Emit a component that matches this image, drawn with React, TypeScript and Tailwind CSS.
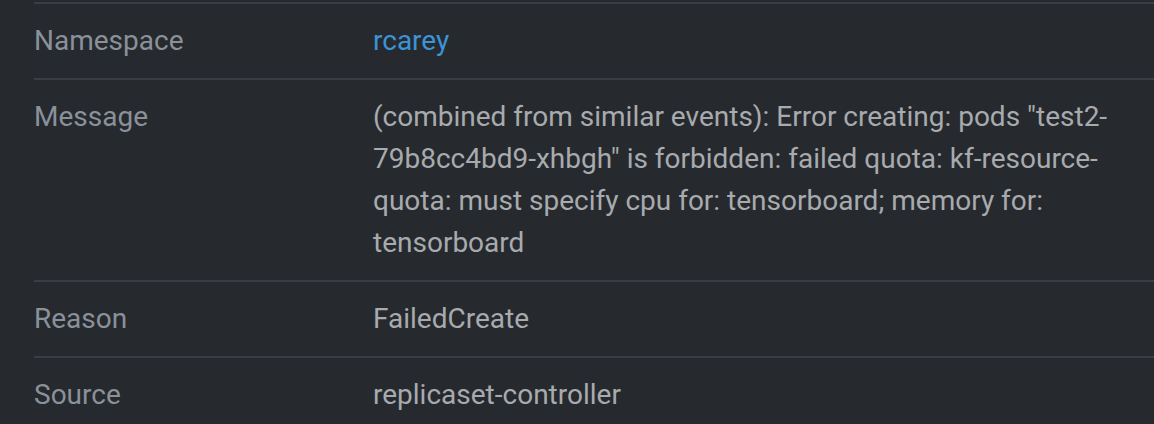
const rows: { label: string; value: string; link?: boolean }[] = [
  { label: 'Namespace', value: 'rcarey', link: true },
  {
    label: 'Message',
    value:
      '(combined from similar events): Error creating: pods "test2-79b8cc4bd9-xhbgh" is forbidden: failed quota: kf-resource-quota: must specify cpu for: tensorboard; memory for: tensorboard',
  },
  { label: 'Reason', value: 'FailedCreate' },
  { label: 'Source', value: 'replicaset-controller' },
];

export default function App() {
  return (
    <div
      className="h-[424px] w-full overflow-hidden bg-[#26292d] pl-[34px] pt-[2px]"
      style={{ fontFamily: 'Roboto, "Liberation Sans", sans-serif' }}
    >
      {rows.map((row) => (
        <div
          key={row.label}
          className="flex border-t-2 border-[#3a3e44] py-4 text-[28px] leading-[42px]"
        >
          <div className="w-[339px] shrink-0 text-[#8a919b]">{row.label}</div>
          <div className="flex-1 pr-2">
            {row.link ? (
              <a href="#" className="text-[#3a94d6]">
                {row.value}
              </a>
            ) : (
              <span className="text-[#a8abae]">{row.value}</span>
            )}
          </div>
        </div>
      ))}
    </div>
  );
}
